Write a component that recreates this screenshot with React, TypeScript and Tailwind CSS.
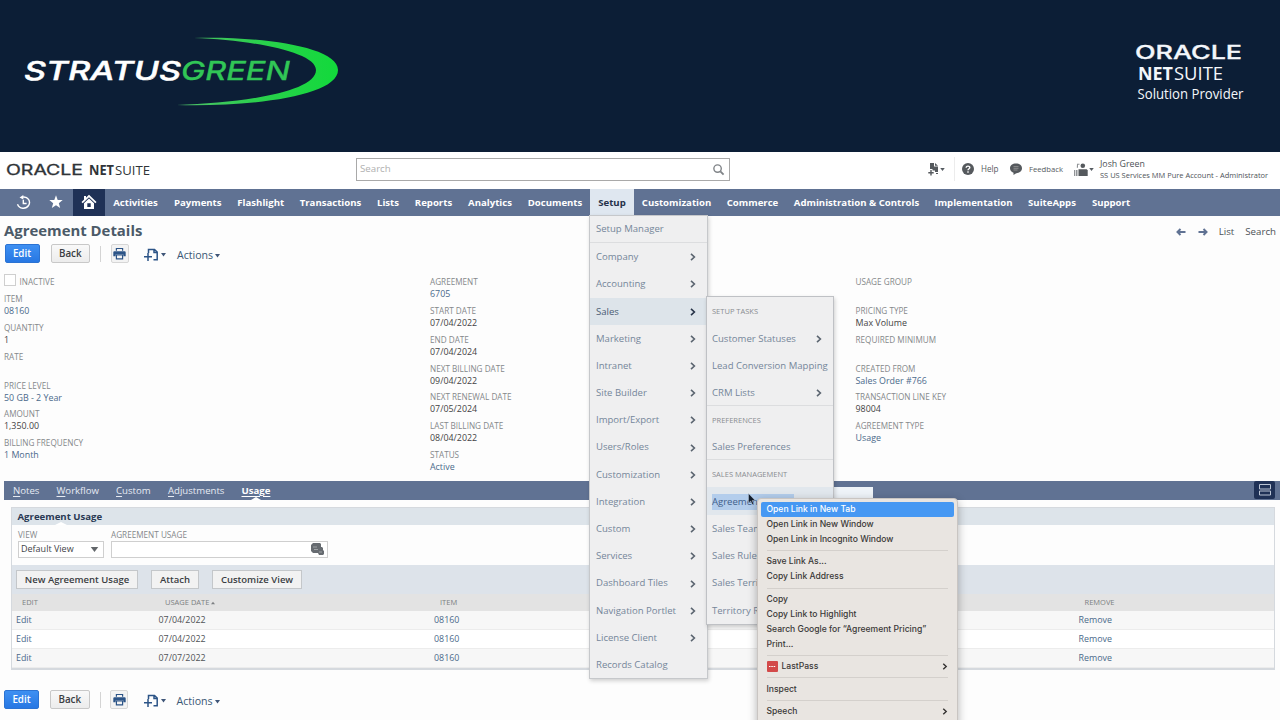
import clsx from "clsx";

const navItems = [
  { label: "Activities", width: "w-[61px]" },
  { label: "Payments", width: "w-[63.5px]" },
  { label: "Flashlight", width: "w-[62.5px]" },
  { label: "Transactions", width: "w-[77px]" },
  { label: "Lists", width: "w-[38px]" },
  { label: "Reports", width: "w-[53px]" },
  { label: "Analytics", width: "w-[60px]" },
  { label: "Documents", width: "w-[70px]" },
  { label: "Setup", width: "w-[44px]", active: true },
  { label: "Customization", width: "w-[85px]" },
  { label: "Commerce", width: "w-[67px]" },
  { label: "Administration & Controls", width: "w-[141px]" },
  { label: "Implementation", width: "w-[93px]" },
  { label: "SuiteApps", width: "w-[64px]" },
  { label: "Support", width: "w-[54px]" },
];

type Field = { label: string; value?: string; link?: boolean };

const itemFields: Field[] = [
  { label: "ITEM", value: "08160", link: true },
  { label: "QUANTITY", value: "1" },
  { label: "RATE" },
  { label: "PRICE LEVEL", value: "50 GB - 2 Year", link: true },
  { label: "AMOUNT", value: "1,350.00" },
  { label: "BILLING FREQUENCY", value: "1 Month", link: true },
];

const agreementFields: Field[] = [
  { label: "AGREEMENT", value: "6705", link: true },
  { label: "START DATE", value: "07/04/2022" },
  { label: "END DATE", value: "07/04/2024" },
  { label: "NEXT BILLING DATE", value: "09/04/2022" },
  { label: "NEXT RENEWAL DATE", value: "07/05/2024" },
  { label: "LAST BILLING DATE", value: "08/04/2022" },
  { label: "STATUS", value: "Active", link: true },
];

const pricingFields: Field[] = [
  { label: "USAGE GROUP" },
  { label: "PRICING TYPE", value: "Max Volume" },
  { label: "REQUIRED MINIMUM" },
  { label: "CREATED FROM", value: "Sales Order #766", link: true },
  { label: "TRANSACTION LINE KEY", value: "98004" },
  { label: "AGREEMENT TYPE", value: "Usage", link: true },
];

const setupMenu = [
  "Setup Manager",
  "Company",
  "Accounting",
  "Sales",
  "Marketing",
  "Intranet",
  "Site Builder",
  "Import/Export",
  "Users/Roles",
  "Customization",
  "Integration",
  "Custom",
  "Services",
  "Dashboard Tiles",
  "Navigation Portlet",
  "License Client",
  "Records Catalog",
];

const salesMenu = [
  { label: "SETUP TASKS", heading: true },
  { label: "Customer Statuses", arrow: true },
  { label: "Lead Conversion Mapping" },
  { label: "CRM Lists", arrow: true, last: true },
  { label: "PREFERENCES", heading: true },
  { label: "Sales Preferences", last: true },
  { label: "SALES MANAGEMENT", heading: true },
  { label: "Agreement Pricing", arrow: true, selected: true },
  { label: "Sales Teams" },
  { label: "Sales Rules" },
  { label: "Sales Territories" },
  { label: "Territory Rules" },
];

const contextMenu = [
  ["Open Link in New Tab", "Open Link in New Window", "Open Link in Incognito Window"],
  ["Save Link As...", "Copy Link Address"],
  ["Copy", "Copy Link to Highlight", "Search Google for “Agreement Pricing”", "Print..."],
  ["LastPass"],
  ["Inspect"],
  ["Speech"],
];

const usageRows = ["07/04/2022", "07/04/2022", "07/07/2022"];

function Chevron({ className }: { className?: string }) {
  return (
    <svg viewBox="0 0 6 8" className={clsx("h-2 w-1.5 shrink-0", className)} fill="none" stroke="currentColor" strokeWidth="1.6">
      <path d="M1 .8 4.4 4 1 7.2" />
    </svg>
  );
}

function Caret({ className }: { className?: string }) {
  return (
    <svg viewBox="0 0 6 4" className={clsx("shrink-0", className)} fill="currentColor">
      <path d="M0 0h6L3 4z" />
    </svg>
  );
}

function StratusLogo() {
  return (
    <svg viewBox="0 0 330 90" className="h-[90px] w-[330px]">
      <defs>
        <linearGradient id="swoosh" x1="0" x2="1">
          <stop offset="0" stopColor="#4fbf6a" />
          <stop offset=".5" stopColor="#2bd04d" />
          <stop offset="1" stopColor="#12d93b" />
        </linearGradient>
      </defs>
      <path
        d="M182 8C245 6 326 16 326 40C326 66 240 77 165 75C230 73 304 62 304 40C304 22 240 10 182 8Z"
        fill="url(#swoosh)"
      />
      <g fontFamily="Inter, 'Liberation Sans', sans-serif" fontStyle="italic" fontSize="26" strokeWidth=".5">
        <text x="12" y="49.500" fill="#fff" stroke="#fff" fontWeight="500" textLength="157" lengthAdjust="spacingAndGlyphs">STRATUS</text>
        <text x="169" y="49.500" fill="#31c656" stroke="#31c656" fontWeight="400" textLength="109" lengthAdjust="spacingAndGlyphs">GREEN</text>
      </g>
    </svg>
  );
}

function PartnerLogo() {
  return (
    <svg viewBox="0 0 120 64" className="h-16 w-[120px]" fill="#f4f7fb" fontFamily="'Open Sans', sans-serif">
      <text x="2" y="18" fontFamily="Inter, sans-serif" fontWeight="500" fontSize="18.500" stroke="#f4f7fb" strokeWidth=".3" textLength="107" lengthAdjust="spacingAndGlyphs">ORACLE</text>
      <text x="5" y="38.500" fontWeight="700" fontSize="18" textLength="35" lengthAdjust="spacingAndGlyphs">NET</text>
      <text x="41" y="38.500" fontSize="18" textLength="49" lengthAdjust="spacingAndGlyphs">SUITE</text>
      <text x="4.500" y="58" fontSize="14" textLength="106" lengthAdjust="spacingAndGlyphs">Solution Provider</text>
    </svg>
  );
}

function NetSuiteLogo() {
  return (
    <svg viewBox="0 0 150 20" className="h-5 w-[150px]" fill="#303438" fontFamily="'Open Sans', sans-serif">
      <text x="1" y="15.500" fontFamily="Inter, sans-serif" fontSize="14" stroke="#303438" strokeWidth=".3" textLength="77" lengthAdjust="spacingAndGlyphs">ORACLE</text>
      <text x="84" y="15.500" fontWeight="700" fontSize="13.500" textLength="25" lengthAdjust="spacingAndGlyphs">NET</text>
      <text x="110" y="15.500" fontSize="13.500" textLength="35" lengthAdjust="spacingAndGlyphs">SUITE</text>
    </svg>
  );
}

function TopBar() {
  return (
    <div className="flex h-[37px] items-center bg-white pb-[3px] pl-[5px] text-[#555b61]">
      <NetSuiteLogo />
      <div className="ml-[201px] flex h-[23px] w-[374px] items-center justify-between border border-[#a9a9a9] bg-white pr-1 pl-[3px] text-[9.700px] text-[#b0b0b0]">
        Search
        <svg viewBox="0 0 14 14" className="size-[13px]" fill="none" stroke="#808488" strokeWidth="1.500">
          <circle cx="6" cy="6" r="4" />
          <path d="m9 9 3.500 3.500" strokeWidth="2" />
        </svg>
      </div>
      <div className="ml-[198px] flex items-center">
        <svg viewBox="0 0 12 14" className="h-3.5 w-3" fill="#55595d">
          <path d="M2 1h4v3.500h4V10H7V8.500H4.500V7H2zM7 1l3 2.700H7zM2.300 8h1.400v2h2v1.400h-2v2H2.300v-2h-2V10h2zM8 11h2v1H8z" />
        </svg>
        <Caret className="mt-px h-[3px] w-[5px]" />
        <div className="ml-[9px] h-6 w-px bg-[#ececec]" />
        <svg viewBox="0 0 12 12" className="ml-[7px] size-3">
          <circle cx="6" cy="6" r="6" fill="#55595d" />
          <path d="M4.200 4.700C4.200 2.500 7.900 2.600 7.800 4.700 7.700 5.800 6 5.700 6 7.300M6 8.200v1.500" fill="none" stroke="#fff" strokeWidth="1.400" />
        </svg>
        <span className="mt-px ml-[7px] w-[29px] text-[8.100px]">Help</span>
        <svg viewBox="0 0 12 12" className="size-3">
          <path d="M6 .5c3.600 0 6 2 6 4.800s-2.500 4.900-5.800 4.900L3.500 12v-2.300C1.400 9 0 7.400 0 5.300 0 2.500 2.400.5 6 .5z" fill="#55595d" />
          <path d="M3.500 3.600h5M3.500 5.300h5M3.500 7h4" stroke="#999" strokeWidth=".8" />
        </svg>
        <span className="mt-px ml-[7px] w-[45px] text-[7.700px]">Feedback</span>
        <svg viewBox="0 0 14 13" className="h-[13px] w-3.5" fill="#55595d">
          <circle cx="8.800" cy="2.800" r="2.300" />
          <path d="M4.500 6.200h8.200l1 1V13H4.500z" />
          <path d="M0 7h1.300v6H0zM2 7h1.500v6H2zM3 .8h2.500v1H4v3H2.800z" opacity=".65" />
        </svg>
        <Caret className="mt-px ml-px h-[3px] w-[5px]" />
      </div>
      <div className="ml-[6px] pt-[2px] leading-[11px] whitespace-nowrap text-[#4e5358]">
        <div className="text-[8.800px]">Josh Green</div>
        <div className="text-[7.480px]">SS US Services MM Pure Account - Administrator</div>
      </div>
    </div>
  );
}

function NavBar() {
  return (
    <nav className="flex h-[26.500px] items-stretch bg-[#607293] text-[9.600px] font-bold text-white">
      <div className="flex w-[73px] items-center gap-[18px] pl-[16px]">
        <svg viewBox="0 0 16 16" className="size-[15px]" fill="none" stroke="#fff" strokeWidth="1.500">
          <path d="M6.500 2.300C13 1 16 7 13.400 11.200 10.500 15.500 3.500 15 1.600 9.800" />
          <path d="M7.800 5v4h3.500" />
          <path d="m7.800 0-4 2.600 4 2.200z" fill="#fff" stroke="none" />
        </svg>
        <svg viewBox="0 0 14 14" className="size-[14px]" fill="#fff">
          <path d="m7 .3 1.700 4.600 5 .2-3.900 3.100 1.400 4.900L7 10.300l-4.200 2.800 1.400-4.900L.3 5.100l5-.2z" />
        </svg>
      </div>
      <div className="flex w-8 items-center justify-center bg-[#1f3156]">
        <svg viewBox="0 0 16 16" className="size-4" fill="#fff">
          <path d="M8 .8 15.500 8l-1.200 1.200L8 3.300 1.700 9.200.5 8zM3 2h2v2.500L3 6.300z" />
          <path fillRule="evenodd" d="M8 4.600 13 9.300V15H3V9.300zM6.300 9.300V13h3.400V9.300z" />
        </svg>
      </div>
      {navItems.map((item) => (
        <div
          key={item.label}
          className={clsx("flex shrink-0 items-center justify-center pt-px whitespace-nowrap", item.width, item.active && "bg-[#dfe7f0] text-[#26324a]")}
        >
          {item.label}
        </div>
      ))}
    </nav>
  );
}

function Toolbar() {
  return (
    <div className="flex h-[20px] items-center text-[9.800px] font-semibold">
      <button className="h-[19px] w-[35px] rounded-[2px] border border-[#2b73d3] bg-linear-to-b from-[#3e90f2] to-[#2777e3] pt-px text-white">Edit</button>
      <button className="ml-[11px] h-[19px] w-[39.500px] rounded-[2px] border border-[#c8c8c8] bg-linear-to-b from-[#f9f9f9] to-[#ececec] pt-px text-[#3a3d42]">Back</button>
      <div className="ml-[10px] h-4 w-px bg-[#d4d4d4]" />
      <div className="ml-[9.500px] flex h-[19px] w-[18px] items-center justify-center rounded-[2px] border border-[#d6d6d6] bg-[#f3f3f3]">
        <svg viewBox="0 0 14 13" className="h-[12px] w-[13px] shrink-0" fill="#2c5487">
          <path d="M3 0h8v3H3zM4.300 1.200V3h5.400V1.200zM1.500 3.500h11c.8 0 1.200.4 1.200 1.200V9h-2.500V7H2.800v2H.3V4.700c0-.8.4-1.200 1.200-1.200z" fillRule="evenodd" />
          <path d="M3 7h8v5.500H3zM4.300 8.200v3h5.400v-3z" fillRule="evenodd" />
        </svg>
      </div>
      <svg viewBox="0 0 15 14" className="mt-[3px] ml-[15.500px] h-3.5 w-[15px]" fill="none" stroke="#2c5487" strokeWidth="1.500">
        <path d="M4.500 5V1.500h6L13.200 4v7.700H9.500M10 1.500v3h3M0 8.700h8M4 5v8" />
      </svg>
      <Caret className="mt-[3px] ml-[2px] h-[3.500px] w-[5px] text-[#3f5678]" />
      <span className="mt-[5px] ml-[11px] text-[10.600px] font-normal text-[#3b5875]">Actions</span>
      <Caret className="mt-[5px] ml-[2px] h-[3.500px] w-[5px] text-[#3f5678]" />
    </div>
  );
}

function FieldList({ fields }: { fields: Field[] }) {
  return (
    <dl>
      {fields.map((field) => (
        <div key={field.label} className="h-[28.850px] leading-[12px] whitespace-nowrap">
          <dt className="text-[8.180px] text-[#85888b]">{field.label}</dt>
          <dd className={clsx("text-[8.900px]", field.link ? "text-[#4b6a8b]" : "text-[#444]")}>{field.value}</dd>
        </div>
      ))}
    </dl>
  );
}

function Tab({ label, className }: { label: string; className?: string }) {
  return (
    <span className={className}>
      <span className="underline underline-offset-2">{label[0]}</span>
      {label.slice(1)}
    </span>
  );
}

function UsagePanel() {
  return (
    <section className="mr-[5px] ml-[11px] h-[163.500px] border border-b-2 border-[#d5d9de] bg-[#fdfdfd]">
      <div className="relative flex h-[17.500px] items-center bg-[#dde4ea] pt-px pl-[5.500px] text-[9.600px] font-bold text-[#293954]">
        Agreement Usage
        <span className="absolute bottom-0 left-[43px] border-x-[6px] border-b-[3px] border-x-transparent border-b-white" />
      </div>
      <div className="flex h-10 gap-[7px] pt-[3.500px] pl-[6px] text-[#3f4347]">
        <div className="w-[86px]">
          <div className="text-[8.180px] leading-[12px] text-[#85888b]">VIEW</div>
          <div className="flex h-[17px] items-center justify-between border border-[#cfcfcf] bg-white pr-1 pl-[2px] text-[9px]">
            Default View
            <Caret className="h-[5px] w-[9px] text-[#62666a]" />
          </div>
        </div>
        <div className="w-[217px]">
          <div className="text-[8.180px] leading-[12px] text-[#85888b]">AGREEMENT USAGE</div>
          <div className="flex h-[17px] items-center justify-end border border-[#cfcfcf] bg-white pr-[3px]">
            <svg viewBox="0 0 13 12" className="h-3 w-[13px]" fill="#666b70">
              <path d="M2 0h7l1 1v3h1l1 1v2l1 1v3l-1 1H8l-1-2H2L0 8V2z" />
              <path d="M2 4h4M3 6.500h4M8 9h3" stroke="#aeb1b4" strokeWidth=".8" />
            </svg>
          </div>
        </div>
      </div>
      <div className="flex h-[28.500px] items-center gap-[13px] bg-[#dde3ea] pl-[4px] text-[9.500px] font-semibold text-[#3a3d42]">
        <button className="h-[19px] w-[122px] border border-[#c4c7ca] bg-[#f2f2f2] pt-px">New Agreement Usage</button>
        <button className="h-[19px] w-[48px] border border-[#c4c7ca] bg-[#f2f2f2] pt-px">Attach</button>
        <button className="h-[19px] w-[90px] border border-[#c4c7ca] bg-[#f2f2f2] pt-px">Customize View</button>
      </div>
      <div className="flex h-[17.500px] items-center bg-[#e3e3e3] pt-px text-[7.500px] text-[#7c7f82]">
        <span className="w-[153px] pl-[10px]">EDIT</span>
        <span className="flex w-[275px] items-center gap-[2px]">
          USAGE DATE
          <Caret className="h-1 w-1 rotate-180" />
        </span>
        <span className="w-[644.500px]">ITEM</span>
        <span>REMOVE</span>
      </div>
      {usageRows.map((date, i) => (
        <div
          key={i}
          className={clsx("flex h-[19px] items-center border-b border-[#ececec] pb-px text-[8.900px] text-[#4b6a8b]", i % 2 ? "bg-white" : "bg-[#f7f7f7]")}
        >
          <span className="w-[146.500px] pl-[4px]">Edit</span>
          <span className="w-[275.500px] text-[#505356]">{date}</span>
          <span className="w-[644.500px]">08160</span>
          <span>Remove</span>
        </div>
      ))}
    </section>
  );
}

function SetupMenu() {
  return (
    <div className="absolute top-[215px] left-[589px] h-[463.500px] w-[118.500px] border border-[#c6c8cb] bg-[#efeff0] text-[9.550px] text-[#75869a] shadow-[1px_2px_4px_rgba(0,0,0,0.18)]">
      {setupMenu.map((label, i) => (
        <div
          key={label}
          className={clsx(
            "flex h-[27.190px] items-center justify-between pt-px pr-[11px] pl-[6px]",
            i === 0 && "border-b border-[#dcdddf]",
            label === "Sales" && "bg-[#dde4ea] text-[#4b5c74]",
          )}
        >
          {label}
          {i > 0 && i < setupMenu.length - 1 && <Chevron className={label === "Sales" ? "text-[#273449]" : "text-[#5b6570]"} />}
        </div>
      ))}
    </div>
  );
}

function SalesMenu() {
  return (
    <div className="absolute top-[296px] left-[706px] h-[328.500px] w-[128px] border border-[#bfc1c5] bg-[#efeff0] text-[9.550px] text-[#75869a] shadow-[1px_2px_4px_rgba(0,0,0,0.18)]">
      {salesMenu.map((item) => (
        <div
          key={item.label}
          className={clsx(
            "flex h-[27.190px] items-center justify-between pt-[2px] pr-[11px] pl-[5px] whitespace-nowrap",
            item.heading && "text-[7.500px] text-[#8a8d91]",
            item.last && "border-b border-[#dcdddf]",
            item.selected && "bg-[#e1e7ed] text-[#3f5f8b]",
          )}
        >
          <span className={clsx(item.selected && "bg-[#b3cdec] py-px")}>{item.label}</span>
          {item.arrow && <Chevron className="text-[#5b6570]" />}
        </div>
      ))}
    </div>
  );
}

function ContextMenu() {
  return (
    <div className="absolute top-[498px] left-[756.500px] h-[240px] w-[201.500px] rounded-[4px] border border-[#c9c5c2] bg-[#e9e5e1] px-[3px] pt-[3px] font-['Inter','Liberation_Sans',sans-serif] text-[8.570px] font-medium text-[#3a3837] shadow-[0_3px_10px_rgba(0,0,0,0.3)]">
      {contextMenu.map((group, i) => (
        <div key={i}>
          {i > 0 && (
            <div className="flex h-[7.400px] items-center px-[6px]">
              <div className="h-px flex-1 bg-[#d4d0cc]" />
            </div>
          )}
          {group.map((label) => (
            <div
              key={label}
              className={clsx("flex h-[15px] items-center rounded-[2px] px-[6px] whitespace-nowrap", label === "Open Link in New Tab" && "bg-[#4698f3] text-white")}
            >
              {label === "LastPass" && (
                <svg viewBox="0 0 11 11" className="mr-1 size-[11px]">
                  <rect width="11" height="11" rx="1" fill="#d34a4a" />
                  <path d="M2 5.500h7" stroke="#fff" strokeWidth="1.200" strokeDasharray="1.500 .8" />
                </svg>
              )}
              <span className="flex-1">{label}</span>
              {(label === "LastPass" || label === "Speech") && <Chevron className="h-[7px] text-[#333130]" />}
            </div>
          ))}
        </div>
      ))}
    </div>
  );
}

export default function App() {
  return (
    <div className="relative h-[720px] w-[1280px] overflow-hidden bg-[#fdfdfd] font-['Open_Sans',sans-serif]">
      <header className="flex h-[152px] items-start justify-between bg-[#0c1e36] pt-[30px] pr-[27px] pl-[12px]">
        <StratusLogo />
        <div className="pt-[11px]">
          <PartnerLogo />
        </div>
      </header>
      <TopBar />
      <NavBar />

      <main>
        <div className="flex h-[28px] items-center justify-between pr-[4px] pl-[4px]">
          <h1 className="pt-[2px] text-[14.900px] font-bold text-[#4b5a68]">Agreement Details</h1>
          <div className="flex items-center gap-[11px] pt-[5px] text-[9.700px] text-[#4c5156]">
            <svg viewBox="0 0 10 8" className="h-2 w-2.5" fill="none" stroke="#607293" strokeWidth="2">
              <path d="M9.500 4H2M4.500 1 1.500 4l3 3" />
            </svg>
            <svg viewBox="0 0 10 8" className="ml-px h-2 w-2.5" fill="none" stroke="#607293" strokeWidth="2">
              <path d="M.5 4H8M5.500 1l3 3-3 3" />
            </svg>
            <span>List</span>
            <span>Search</span>
          </div>
        </div>
        <div className="pl-[4.500px]">
          <Toolbar />
        </div>

        <div className="grid h-[217.500px] grid-cols-[426px_425.500px_1fr] pt-[12.500px] pl-[4px]">
          <div>
            <div className="flex h-[17px] items-start gap-[3.500px] text-[8.180px] leading-[12px] text-[#85888b]">
              <span className="-mt-[2px] size-[12px] border border-[#cfcfcf] bg-white" />
              INACTIVE
            </div>
            <FieldList fields={itemFields} />
          </div>
          <FieldList fields={agreementFields} />
          <FieldList fields={pricingFields} />
        </div>

        <div className="relative ml-[4px] flex h-[19px] items-center bg-[#607293] pt-px pl-[9px] text-[9.600px] text-[#e6ebf3]">
          <Tab label="Notes" className="w-[43.500px]" />
          <Tab label="Workflow" className="w-[59.500px]" />
          <Tab label="Custom" className="w-[52px]" />
          <Tab label="Adjustments" className="w-[73.500px]" />
          <span className="font-bold text-white underline underline-offset-2">Usage</span>
          <span className="absolute bottom-0 left-[247px] border-x-[5px] border-b-[3px] border-x-transparent border-b-white" />
          <span className="absolute top-0 right-[5px] flex h-[18px] w-[21px] items-center justify-center rounded-[2px] bg-[#1f3156]">
            <svg viewBox="0 0 12 12" className="size-3" fill="none" stroke="#b9c3d3">
              <path d="M.5.5h11v4.500H.5zM.5 7h11v4H.5z" />
            </svg>
          </span>
        </div>
        <div className="h-[6.500px]" />
        <UsagePanel />
        <div className="pt-[19.500px] pl-[4px]">
          <Toolbar />
        </div>
      </main>

      <div className="absolute top-[487px] left-[833px] h-[13px] w-10 bg-[#eef3f8]" />
      <SetupMenu />
      <SalesMenu />
      <ContextMenu />
      <svg viewBox="0 0 8 12" className="absolute top-[493px] left-[748px] h-3 w-2">
        <path d="M.5.500v9.500l2.200-2 1.500 3.500 1.500-.7-1.500-3.300h3z" fill="#111c2c" stroke="#cfdcec" strokeWidth=".4" />
      </svg>
    </div>
  );
}
